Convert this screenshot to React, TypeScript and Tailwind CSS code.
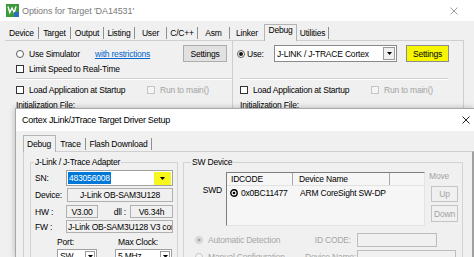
import React from "react";

function Radio({ checked = false, disabled = false }: { checked?: boolean; disabled?: boolean }) {
  return (
    <span
      className={
        disabled
          ? "flex h-[8px] w-[8px] shrink-0 items-center justify-center rounded-full border border-[#c6c6c6] bg-[#f4f4f4]"
          : "flex h-[8px] w-[8px] shrink-0 items-center justify-center rounded-full border border-[#5c5c5c] bg-white"
      }
    >
      {checked && (
        <span
          className={
            disabled ? "h-[4px] w-[4px] rounded-full bg-[#b0b0b0]" : "h-[4px] w-[4px] rounded-full bg-[#111]"
          }
        />
      )}
    </span>
  );
}

function Check({ disabled = false }: { disabled?: boolean }) {
  return (
    <span
      className={
        disabled
          ? "h-[8px] w-[8px] shrink-0 border border-[#c6c6c6] bg-[#f4f4f4]"
          : "h-[8px] w-[8px] shrink-0 border border-[#333] bg-white"
      }
    />
  );
}

function Arrow() {
  return (
    <svg width="5" height="3" viewBox="0 0 5 3">
      <path d="M0 0h5L2.5 3z" fill="#000" />
    </svg>
  );
}

function KeilIcon() {
  return (
    <svg width="13" height="13" viewBox="0 0 13 13" className="shrink-0">
      <rect width="13" height="13" fill="#3c9a3c" />
      <path d="M2 2.5l1.8 6 2.2-4.5 2.2 4.5 1.8-6" fill="none" stroke="#fff" strokeWidth="1.4" />
      <rect x="8" y="8" width="5" height="5" fill="#2b6fc2" />
    </svg>
  );
}

function CloseX({ color }: { color: string }) {
  return (
    <svg width="8" height="8" viewBox="0 0 8 8">
      <path d="M0.5 0.5l7 7M7.5 0.5l-7 7" stroke={color} strokeWidth="1" />
    </svg>
  );
}

const outerTabs: [string, string][] = [
  ["Device", "w-[34px] border-r"],
  ["Target", "w-[32px] border-r"],
  ["Output", "w-[33px] border-r"],
  ["Listing", "w-[31px] border-r"],
  ["User", "w-[32px] border-r"],
  ["C/C++", "w-[31px] border-r"],
  ["Asm", "w-[32px] border-r"],
  ["Linker", "w-[34px]"],
];

export default function App() {
  return (
    <div className="relative h-[257px] w-[474px] overflow-hidden whitespace-nowrap bg-[#f0f0f0] text-[8.5px] leading-[12px] tracking-[-0.2px] text-black [font-family:'Liberation_Sans',Arial,sans-serif]">
      {/* Options for Target window */}
      <div className="flex h-[21px] items-center bg-white pl-[6px]">
        <KeilIcon />
        <span className="ml-[3px] text-[9px] tracking-[-0.1px] text-[#7a7a7a]">Options for Target 'DA14531'</span>
        <span className="ml-auto mr-[16px] flex">
          <CloseX color="#a0a0a0" />
        </span>
      </div>

      <div className="flex h-[19px] items-end pl-[5px]">
        {outerTabs.map(([label, cls]) => (
          <div key={label} className={`mb-[1px] flex h-[12px] items-center justify-center border-[#8f8f8f] ${cls}`}>
            {label}
          </div>
        ))}
        <div className="relative -mb-px flex h-[17px] w-[33px] justify-center border-l border-r border-t border-[#b4b4b4] bg-[#f0f0f0] leading-[10px]">
          Debug
        </div>
        <div className="mb-[1px] flex h-[12px] w-[32px] items-center justify-center border-r border-[#8f8f8f]">
          Utilities
        </div>
      </div>

      <div className="ml-[5px] flex h-[200px] w-[459px] border-r border-t border-[#cfcfcf]">
        {/* left half */}
        <div className="flex w-[228px] flex-col border-r border-[#cfcfcf] pl-[11px] pt-[4px]">
          <div className="flex h-[17px] items-center">
            <div className="flex w-[79px] items-center gap-[5px]">
              <Radio />
              <span>Use Simulator</span>
            </div>
            <div className="w-[88px] text-[#0066cc] underline">with restrictions</div>
            <div className="flex h-[17px] w-[44px] items-center justify-center border border-[#adadad] bg-[#e1e1e1]">
              Settings
            </div>
          </div>
          <div className="mt-[2px] flex h-[10px] items-center gap-[5px]">
            <Check />
            <span>Limit Speed to Real-Time</span>
          </div>
          <div className="mt-[4px] h-[2px] w-[216px] border-b border-t border-b-white border-t-[#d0d0d0]" />
          <div className="mt-[5px] flex h-[10px] items-center">
            <div className="flex w-[131px] items-center gap-[5px]">
              <Check />
              <span>Load Application at Startup</span>
            </div>
            <div className="flex items-center gap-[5px] text-[#a3a3a3]">
              <Check disabled />
              <span>Run to main()</span>
            </div>
          </div>
          <div className="mt-[5px] flex h-[10px] items-center">Initialization File:</div>
        </div>

        {/* right half */}
        <div className="flex flex-1 flex-col pl-[7px] pt-[4px]">
          <div className="-ml-[3px] flex h-[17px] items-center">
            <div className="flex w-[37px] items-center gap-[2px]">
              <Radio checked />
              <span>Use:</span>
            </div>
            <div className="flex h-[17px] w-[123px] items-center border border-[#8a8a8a] bg-white pl-[2px]">
              <span>J-LINK / J-TRACE Cortex</span>
              <span className="ml-auto mr-[1px] flex h-[13px] w-[12px] items-center justify-center border border-[#9a9a9a] bg-[#f0f0f0]">
                <Arrow />
              </span>
            </div>
            <div className="ml-[9px] flex h-[17px] w-[43px] items-center justify-center border border-[#8c8c8c] bg-[#f6f600]">
              Settings
            </div>
          </div>
          <div className="mt-[2px] h-[10px]" />
          <div className="mt-[4px] h-[2px] w-[208px] border-b border-t border-b-white border-t-[#d0d0d0]" />
          <div className="mt-[5px] flex h-[10px] items-center">
            <div className="flex w-[131px] items-center gap-[5px]">
              <Check />
              <span>Load Application at Startup</span>
            </div>
            <div className="flex items-center gap-[5px] text-[#a3a3a3]">
              <Check disabled />
              <span>Run to main()</span>
            </div>
          </div>
          <div className="mt-[5px] flex h-[10px] items-center">Initialization File:</div>
        </div>
      </div>

      {/* Cortex JLink/JTrace Target Driver Setup dialog */}
      <div className="absolute left-[15px] top-[108px] flex h-[149px] w-[459px] flex-col border-l border-t border-[#a8a8a8] bg-[#f0f0f0] shadow-[0_0_6px_rgba(0,0,0,0.25)]">
        <div className="flex h-[22px] shrink-0 items-center bg-white pl-[6px]">
          <span className="text-[9px] tracking-[-0.3px]">Cortex JLink/JTrace Target Driver Setup</span>
          <span className="ml-auto mr-[4px] flex">
            <CloseX color="#222" />
          </span>
        </div>

        <div className="flex h-[20px] shrink-0 items-end pl-[7px]">
          <div className="relative z-10 -mb-px h-[17px] w-[33px] border-l border-r border-t border-[#b4b4b4] bg-[#f0f0f0] pl-[3px] pt-[2px]">
            Debug
          </div>
          <div className="mb-[1px] flex h-[12px] w-[30px] items-center justify-center border-r border-[#8f8f8f]">
            Trace
          </div>
          <div className="mb-[1px] flex h-[12px] w-[66px] items-center justify-center border-r border-[#8f8f8f]">
            Flash Download
          </div>
        </div>

        <div className="ml-[7px] flex flex-1 border-l border-r-2 border-t border-[#cfcfcf] border-r-[#a0a0a0] pl-[6px] pt-[4px]">
          {/* J-Link adapter group */}
          <fieldset className="h-[120px] w-[148px] shrink-0 border border-[#d3d3d3]">
            <legend className="ml-[3px] px-[1px]">J-Link / J-Trace Adapter</legend>
            <div className="flex flex-col pl-[4px] pt-[2px]">
              <div className="flex h-[16px] items-center">
                <span className="w-[31px]">SN:</span>
                <div className="flex h-[16px] w-[107px] items-center border border-[#a0a0a0] bg-white pl-[1px]">
                  <span className="bg-[#0078d7] px-[1px] text-white">483056008</span>
                  <span className="ml-auto mr-[1px] flex h-[13px] w-[17px] items-center justify-center bg-[#f7f71e]">
                    <Arrow />
                  </span>
                </div>
              </div>
              <div className="mt-[2px] flex h-[14px] items-center">
                <span className="w-[31px]">Device:</span>
                <div className="ml-[1px] flex h-[14px] w-[106px] items-center justify-center border border-[#b0b0b0]">
                  J-Link OB-SAM3U128
                </div>
              </div>
              <div className="mt-[3px] flex h-[13px] items-center">
                <span className="w-[31px]">HW :</span>
                <div className="flex h-[13px] w-[32px] items-center justify-center border border-[#b0b0b0]">V3.00</div>
                <span className="w-[32px] pr-[4px] text-right">dll :</span>
                <div className="flex h-[13px] w-[43px] items-center justify-center border border-[#b0b0b0]">V6.34h</div>
              </div>
              <div className="mt-[2px] flex h-[13px] items-center">
                <span className="w-[31px]">FW :</span>
                <div className="flex h-[13px] w-[107px] items-center overflow-hidden border border-[#b0b0b0] pl-[1px]">
                  J-Link OB-SAM3U128 V3 compiled Jan 7 2016
                </div>
              </div>
              <div className="mt-[2px] flex h-[14px] items-center pl-[22px]">
                <span className="w-[61px]">Port:</span>
                <span>Max Clock:</span>
              </div>
              <div className="flex h-[14px] items-center pl-[22px]">
                <div className="flex h-[14px] w-[40px] items-center border border-[#a0a0a0] bg-white pl-[2px]">
                  SW
                  <span className="ml-auto mr-[1px] flex h-[11px] w-[10px] items-center justify-center border border-[#9a9a9a]">
                    <Arrow />
                  </span>
                </div>
                <div className="ml-[18px] flex h-[14px] w-[57px] items-center border border-[#a0a0a0] bg-white pl-[2px]">
                  5 MHz
                  <span className="ml-auto mr-[1px] flex h-[11px] w-[10px] items-center justify-center border border-[#9a9a9a]">
                    <Arrow />
                  </span>
                </div>
              </div>
            </div>
          </fieldset>

          {/* SW Device group */}
          <fieldset className="ml-[5px] h-[120px] w-[280px] shrink-0 border border-[#d3d3d3]">
            <legend className="ml-[7px] px-[1px]">SW Device</legend>
            <div className="flex flex-col pt-[4px]">
              <div className="flex h-[54px]">
                <div className="w-[42px] pr-[4px] pt-[12px] text-right">SWD</div>
                <div className="flex h-[54px] w-[199px] flex-col border border-[#e4e4e4] border-l-[#7d7d7d] border-t-[#7d7d7d] bg-[#f6f6f6]">
                  <div className="flex h-[13px] border-b border-[#e2e2e2]">
                    <div className="w-[66px] border-r border-[#a8a8a8] pl-[4px]">IDCODE</div>
                    <div className="w-[97px] border-r border-[#a8a8a8] pl-[6px]">Device Name</div>
                  </div>
                  <div className="flex h-[13px] items-center">
                    <div className="flex w-[66px] items-center gap-[3px] pl-[3px]">
                      <svg width="8" height="8" viewBox="0 0 8 8">
                        <circle cx="4" cy="4" r="3.2" fill="none" stroke="#000" strokeWidth="1.4" />
                        <circle cx="4" cy="4" r="1.3" fill="#000" />
                      </svg>
                      <span>0x0BC11477</span>
                    </div>
                    <span className="pl-[7px]">ARM CoreSight SW-DP</span>
                  </div>
                </div>
                <div className="ml-[4px] flex w-[30px] flex-col text-[#a3a3a3]">
                  <span className="h-[9px] leading-[9px]">Move</span>
                  <div className="ml-[2px] mt-[5px] flex h-[16px] w-[27px] items-center justify-center border border-[#c4c4c4] bg-[#f0f0f0]">
                    Up
                  </div>
                  <div className="ml-[2px] mt-[3px] flex h-[17px] w-[27px] items-center justify-center border border-[#c4c4c4] bg-[#f0f0f0]">
                    Down
                  </div>
                </div>
              </div>
              <div className="mt-[6px] flex h-[15px] items-center pl-[11px] text-[#a6a6a6]">
                <div className="flex w-[110px] items-center gap-[5px]">
                  <Radio checked disabled />
                  <span>Automatic Detection</span>
                </div>
                <span className="w-[52px] pr-[6px] text-right">ID CODE:</span>
                <div className="h-[14px] w-[80px] border border-[#bdbdbd] bg-[#f0f0f0]" />
              </div>
              <div className="mt-[2px] flex h-[15px] items-center pl-[11px] text-[#a6a6a6]">
                <div className="flex w-[110px] items-center gap-[5px]">
                  <Radio disabled />
                  <span>Manual Configuration</span>
                </div>
                <span className="w-[52px] pr-[6px] text-right">Device Name:</span>
                <div className="h-[14px] w-[99px] border border-[#bdbdbd] bg-[#f0f0f0]" />
              </div>
            </div>
          </fieldset>
        </div>
      </div>
    </div>
  );
}
